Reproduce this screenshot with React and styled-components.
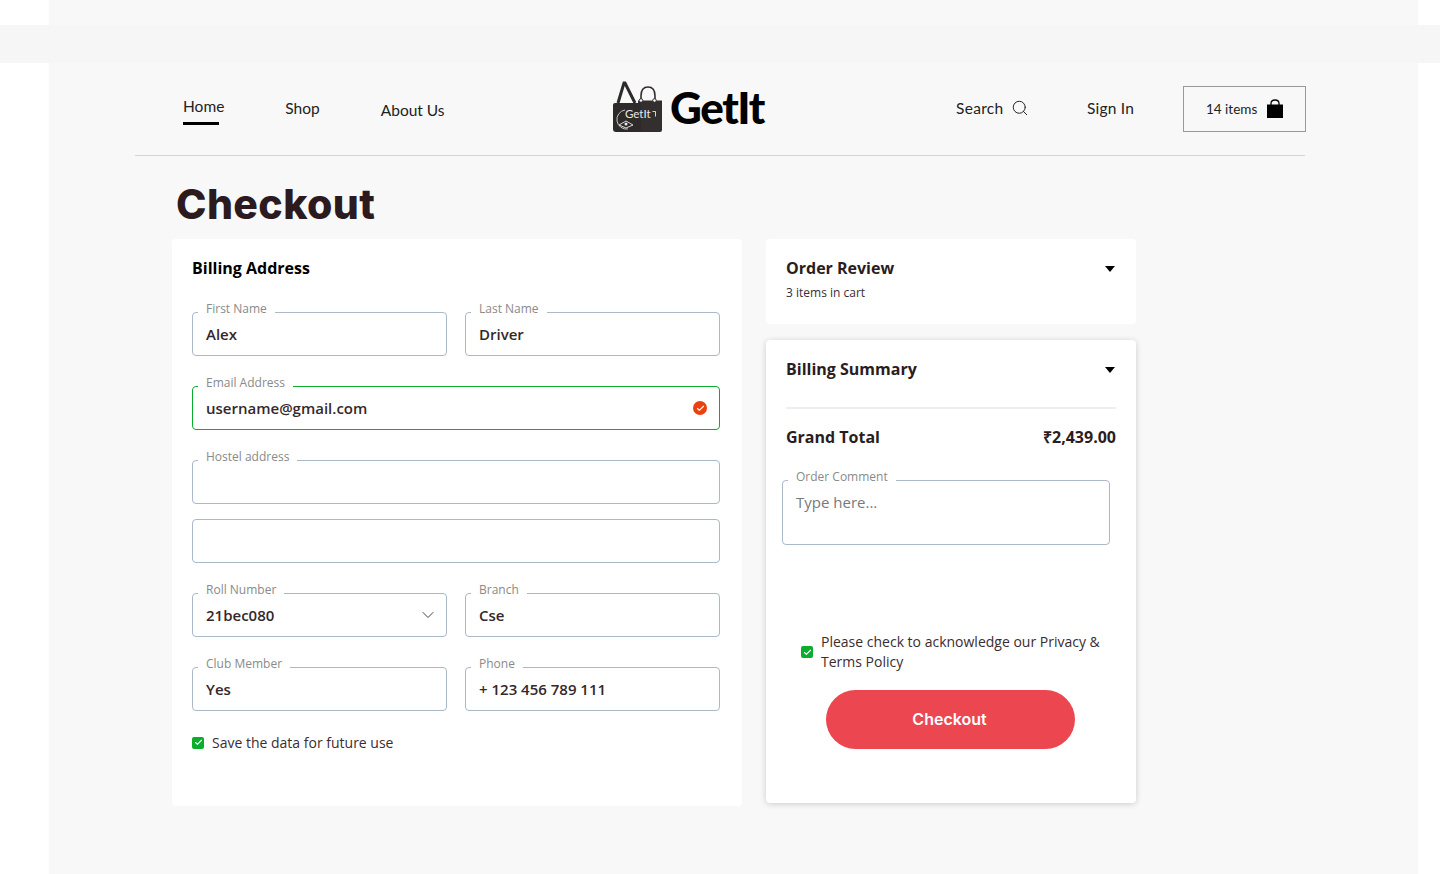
import React from 'react';
import styled, { createGlobalStyle } from 'styled-components';
import { Search, ChevronDown, Check } from 'lucide-react';

const GlobalStyle = createGlobalStyle`
    html, body {
        margin: 0;
        padding: 0;
        background: #fff;
    }
    body {
        font-family: "Open Sans", "Liberation Sans", sans-serif;
        color: #2b1c20;
    }
    * {
        box-sizing: border-box;
    }
`;

const Page = styled.div`
    width: 1440px;
    height: 874px;
    overflow: hidden;
`;

const TopGap = styled.div`
    height: 25px;
    margin: 0 22px 0 49px;
    background: #f8f8f8;
`;

const Strip = styled.div`
    height: 38px;
    background: #f6f6f6;
`;

const Main = styled.main`
    height: 811px;
    margin: 0 22px 0 49px;
    padding: 0 113px 0 86px;
    background: #f8f8f8;
`;

const Header = styled.header`
    display: flex;
    align-items: center;
    height: 93px;
    border-bottom: 1px solid #d4d4d4;
    font-family: "Lato", "Open Sans", sans-serif;
    font-size: 15.5px;
    color: #222;

    > * {
        flex: none;
    }
`;

const Nav = styled.nav`
    display: flex;
    width: 478px;
    padding-left: 48px;
`;

const NavItem = styled.a`
    position: relative;
    margin-right: ${(p) => p.$gap}px;
    margin-top: ${(p) => p.$top}px;
    line-height: 20px;
    ${(p) => p.$active && `
        &::after {
            content: '';
            position: absolute;
            left: 0;
            width: 36px;
            bottom: -5px;
            height: 3px;
            background: #000;
        }
    `}
`;

const Logo = styled.div`
    display: flex;
    align-items: center;
    width: 343px;
    gap: 7px;
    margin-top: -4px;
`;

const LogoName = styled.span`
    font-family: "Lato", sans-serif;
    font-size: 44px;
    line-height: 50px;
    font-weight: 900;
    letter-spacing: -1.4px;
    color: #000;
`;

const SearchLink = styled.a`
    display: flex;
    align-items: center;
    gap: 8px;
    width: 131px;
    margin-top: -2px;
    letter-spacing: 0.3px;
`;

const SignIn = styled.a`
    width: 96px;
    margin-top: -2px;
    letter-spacing: 0.2px;
`;

const CartBox = styled.a`
    display: flex;
    align-items: center;
    width: 123px;
    height: 46px;
    margin-top: -1px;
    padding-left: 22px;
    gap: 10px;
    border: 1px solid #999;
    font-size: 13.5px;
`;

const Title = styled.h1`
    margin: 26px 0 13px 41px;
    font-family: "Inter", sans-serif;
    font-size: 41px;
    line-height: 44px;
    font-weight: 800;
    letter-spacing: 0.4px;
    color: #2b1a1e;
`;

const Columns = styled.div`
    display: flex;
    align-items: flex-start;
    gap: 24px;
    margin-left: 37px;
`;

const Card = styled.section`
    width: ${(p) => p.$width}px;
    height: ${(p) => p.$height}px;
    padding: ${(p) => p.$padding};
    background: #fff;
    border-radius: 4px;
    ${(p) => p.$raised && 'box-shadow: 0 1px 6px rgba(0, 0, 0, 0.18);'}
`;

const SideColumn = styled.div`
    display: flex;
    flex-direction: column;
    gap: 16px;
`;

const CardTitle = styled.h2`
    margin: 0;
    font-size: 16px;
    line-height: 22px;
    font-weight: 700;
    color: ${(p) => p.$color || '#2b1c20'};
`;

const FormRows = styled.div`
    display: flex;
    flex-direction: column;
    margin-top: 33px;
`;

const Row = styled.div`
    display: grid;
    grid-template-columns: repeat(${(p) => p.$cols || 1}, 1fr);
    gap: 18px;
    margin-bottom: ${(p) => p.$after ?? 30}px;
`;

const FieldBox = styled.div`
    position: relative;
    display: flex;
    align-items: ${(p) => (p.$tall ? 'flex-start' : 'center')};
    justify-content: space-between;
    width: ${(p) => p.$width || 'auto'};
    height: ${(p) => p.$height || 44}px;
    padding: ${(p) => (p.$tall ? '10px 13px' : '0 13px')};
    border: 1px solid ${(p) => (p.$ok ? '#0aae2c' : '#aab8c8')};
    border-radius: 4px;
    font-size: 15px;
    line-height: 22px;
    font-weight: 600;
    color: #35272b;
`;

const FieldLabel = styled.label`
    position: absolute;
    left: 5px;
    top: -11px;
    padding: 0 8px;
    background: #fff;
    font-size: 12px;
    line-height: 14px;
    font-weight: 400;
    color: #8a8a8a;
    white-space: nowrap;
`;

const Placeholder = styled.span`
    font-weight: 400;
    color: #77797d;
`;

const OkBadge = styled.span`
    display: flex;
    align-items: center;
    justify-content: center;
    width: 14px;
    height: 14px;
    margin-right: -1px;
    border-radius: 50%;
    background: #ea4110;
    color: #fff;
`;

const CheckRow = styled.div`
    display: flex;
    align-items: center;
    gap: ${(p) => p.$gap}px;
    font-size: 14px;
    line-height: ${(p) => p.$line || 19}px;
    color: #3a2d30;
`;

const CheckMark = styled.span`
    display: flex;
    align-items: center;
    justify-content: center;
    flex: none;
    width: 12px;
    height: 12px;
    border-radius: 2px;
    background: #0aae2c;
    color: #fff;
`;

const CardHead = styled.div`
    display: flex;
    align-items: center;
    justify-content: space-between;
`;

const Caret = styled.span`
    width: 0;
    height: 0;
    margin: 2px 1px 0 0;
    border-left: 5px solid transparent;
    border-right: 5px solid transparent;
    border-top: 6px solid #000;
`;

const SubText = styled.p`
    margin: 5px 0 0;
    font-size: 12px;
    line-height: 18px;
    color: #3a2d30;
`;

const Divider = styled.hr`
    height: 2px;
    margin: 27px 0 17px;
    border: 0;
    background: #eeeeee;
`;

const TotalRow = styled.div`
    display: flex;
    justify-content: space-between;
    font-size: 16px;
    line-height: 22px;
    font-weight: 700;
`;

const CommentWrap = styled.div`
    margin: 32px 0 87px -4px;
`;

const PolicyWrap = styled.div`
    margin-left: 15px;
    width: 310px;
`;

const CheckoutButton = styled.button`
    display: block;
    width: 249px;
    height: 59px;
    margin: 18px 0 0 40px;
    padding: 0 2px 2px 0;
    border: 0;
    border-radius: 30px;
    background: #ec4651;
    color: #fff;
    font-family: "Inter", sans-serif;
    font-size: 16px;
    font-weight: 600;
`;

const Chevron = styled(ChevronDown)`
    margin-right: -5px;
    color: #444;
`;

const Field = ({ label, children, ...rest }) => (
    <FieldBox {...rest}>
        {label && <FieldLabel>{label}</FieldLabel>}
        {children}
    </FieldBox>
);

const LogoMark = () => (
    <svg width="50" height="52" viewBox="0 0 50 52" fill="none">
        {/* back bag */}
        <path d="M25 19.500h24v29.500a2 2 0 0 1-2 2H25z" fill="#332f2f" />
        <path d="M28 18v-3C28 9 31 6 35 6s7 3 7 9v3" stroke="#332f2f" strokeWidth="1.600" />
        <circle cx="28" cy="19.500" r="1.800" fill="#f8f8f8" stroke="#332f2f" />
        <circle cx="41.500" cy="19.500" r="1.800" fill="#f8f8f8" stroke="#332f2f" />
        {/* front bag */}
        <path d="M0 24a2 2 0 0 1 2-2h24a2 2 0 0 1 2 2v24a3 3 0 0 1-3 3H3a3 3 0 0 1-3-3z" fill="#2e2a2a" />
        <path d="M5 22 11 2h1l10 20" stroke="#2e2a2a" strokeWidth="3" />
        <text x="12" y="37" fontFamily="Lato, sans-serif" fontSize="11.500" fill="#e8e8e8">GetIt</text>
        <path d="M39.500 30.500h3v5" stroke="#e8e8e8" strokeWidth="0.900" />
        <path d="M12 29a9.500 9.500 0 0 0 3 19" stroke="#e8e8e8" strokeWidth="0.800" />
        <path d="M6 44l7-4 7 4-7 3z" stroke="#e8e8e8" strokeWidth="0.900" />
        <circle cx="13" cy="43" r="1.500" fill="#e8e8e8" />
    </svg>
);

const BagIcon = () => (
    <svg width="16" height="19" viewBox="0 0 16 19" fill="none">
        <path d="M0 5.500h16V19H0z" fill="#000" />
        <path d="M4 6V4.500C4 2 5.500 1 8 1s4 1 4 3.500V6" stroke="#000" strokeWidth="1.300" />
    </svg>
);

const App = () => (
    <Page>
        <GlobalStyle />
        <TopGap />
        <Strip />
        <Main>
            <Header>
                <Nav>
                    <NavItem $active $gap={61} $top={-3}>Home</NavItem>
                    <NavItem $gap={61} $top={-1}>Shop</NavItem>
                    <NavItem $gap={0} $top={1}>About Us</NavItem>
                </Nav>
                <Logo>
                    <LogoMark />
                    <LogoName>GetIt</LogoName>
                </Logo>
                <SearchLink>
                    Search
                    <Search size={18} strokeWidth={1.300} />
                </SearchLink>
                <SignIn>Sign In</SignIn>
                <CartBox>
                    14 items
                    <BagIcon />
                </CartBox>
            </Header>
            <Title>Checkout</Title>
            <Columns>
                <Card $width={570} $height={567} $padding="18px 22px 0 20px">
                    <CardTitle $color="#000">Billing Address</CardTitle>
                    <FormRows>
                        <Row $cols={2}>
                            <Field label="First Name">Alex</Field>
                            <Field label="Last Name">Driver</Field>
                        </Row>
                        <Row>
                            <Field label="Email Address" $ok>
                                username@gmail.com
                                <OkBadge><Check size={9} strokeWidth={3} /></OkBadge>
                            </Field>
                        </Row>
                        <Row $after={15}>
                            <Field label="Hostel address" />
                        </Row>
                        <Row>
                            <Field />
                        </Row>
                        <Row $cols={2}>
                            <Field label="Roll Number">
                                21bec080
                                <Chevron size={20} strokeWidth={1.200} />
                            </Field>
                            <Field label="Branch">Cse</Field>
                        </Row>
                        <Row $cols={2} $after={22}>
                            <Field label="Club Member">Yes</Field>
                            <Field label="Phone">+ 123 456 789 111</Field>
                        </Row>
                        <CheckRow $gap={8}>
                            <CheckMark><Check size={9} strokeWidth={3} /></CheckMark>
                            Save the data for future use
                        </CheckRow>
                    </FormRows>
                </Card>
                <SideColumn>
                    <Card $width={370} $height={85} $padding="18px 20px 0">
                        <CardHead>
                            <CardTitle>Order Review</CardTitle>
                            <Caret />
                        </CardHead>
                        <SubText>3 items in cart</SubText>
                    </Card>
                    <Card $width={370} $height={463} $padding="18px 20px 0" $raised>
                        <CardHead>
                            <CardTitle>Billing Summary</CardTitle>
                            <Caret />
                        </CardHead>
                        <Divider />
                        <TotalRow>
                            <span>Grand Total</span>
                            <span>₹2,439.00</span>
                        </TotalRow>
                        <CommentWrap>
                            <Field label="Order Comment" $tall $width="328px" $height={65}>
                                <Placeholder>Type here...</Placeholder>
                            </Field>
                        </CommentWrap>
                        <PolicyWrap>
                            <CheckRow $gap={8} $line={20}>
                                <CheckMark><Check size={9} strokeWidth={3} /></CheckMark>
                                <span>Please check to acknowledge our Privacy &amp; Terms Policy</span>
                            </CheckRow>
                        </PolicyWrap>
                        <CheckoutButton>Checkout</CheckoutButton>
                    </Card>
                </SideColumn>
            </Columns>
        </Main>
    </Page>
);

export default App;
